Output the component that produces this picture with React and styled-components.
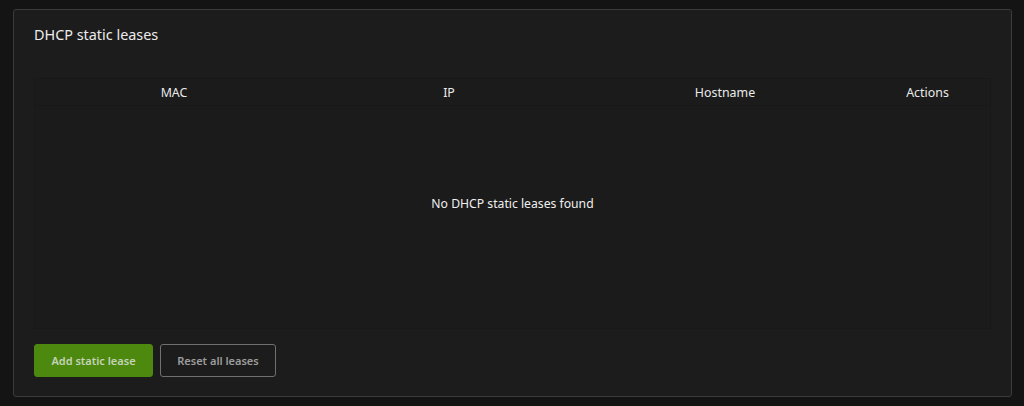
import React from 'react';
import styled, { createGlobalStyle } from 'styled-components';

const GlobalStyle = createGlobalStyle`
  html, body {
    margin: 0;
    padding: 0;
    background: #141414;
  }
  body {
    font-family: "Noto Sans", "Open Sans", sans-serif;
    color: #e6e6e6;
  }
`;

const Page = styled.div`
  padding: 9px 12px 9px 13px;
  height: 406px;
  box-sizing: border-box;
`;

const Card = styled.section`
  box-sizing: border-box;
  height: 388px;
  background: #1c1c1c;
  border: 1px solid #3b3b3b;
  border-radius: 3px;
  display: flex;
  flex-direction: column;
  padding: 14px 20px 19px 20px;
`;

const Title = styled.h3`
  margin: 0;
  font-size: 14.4px;
  font-weight: 400;
  line-height: 22px;
  color: #ececec;
`;

const Table = styled.div`
  margin-top: 32px;
  height: 249px;
  display: flex;
  flex-direction: column;
  border: 1px solid #181818;
  background: #1b1b1b;
`;

const HeadRow = styled.div`
  display: grid;
  grid-template-columns: 278px 272px 280px 1fr;
  height: 26px;
  align-items: center;
  border-bottom: 1px solid #181818;
`;

const HeadCell = styled.div`
  text-align: center;
  font-size: 12.4px;
  color: #eaeaea;
`;

const Body = styled.div`
  flex: 1;
  display: flex;
  align-items: center;
  justify-content: center;
  font-size: 12.2px;
  color: #f0f0f0;
  padding-bottom: 28px;
`;

const Actions = styled.div`
  display: flex;
  gap: 7px;
  margin-top: auto;
`;

const Button = styled.button`
  box-sizing: border-box;
  height: 33px;
  padding: 0;
  white-space: nowrap;
  font-family: "Noto Sans", "Open Sans", sans-serif;
  font-size: 11px;
  font-weight: 600;
  border-radius: 3px;
  cursor: pointer;
  background: ${(p) => (p.$primary ? '#4c890e' : 'transparent')};
  color: ${(p) => (p.$primary ? '#c5d3b8' : '#9d9d9d')};
  border: 1px solid ${(p) => (p.$primary ? '#4c890e' : '#707070')};
  width: ${(p) => p.$w}px;
`;

const columns = ['MAC', 'IP', 'Hostname', 'Actions'];

const App = () => (
  <Page>
    <GlobalStyle />
    <Card>
      <Title>DHCP static leases</Title>
      <Table>
        <HeadRow>
          {columns.map((c) => (
            <HeadCell key={c}>{c}</HeadCell>
          ))}
        </HeadRow>
        <Body>No DHCP static leases found</Body>
      </Table>
      <Actions>
        <Button $primary $w={119}>Add static lease</Button>
        <Button $w={116}>Reset all leases</Button>
      </Actions>
    </Card>
  </Page>
);

export default App;
